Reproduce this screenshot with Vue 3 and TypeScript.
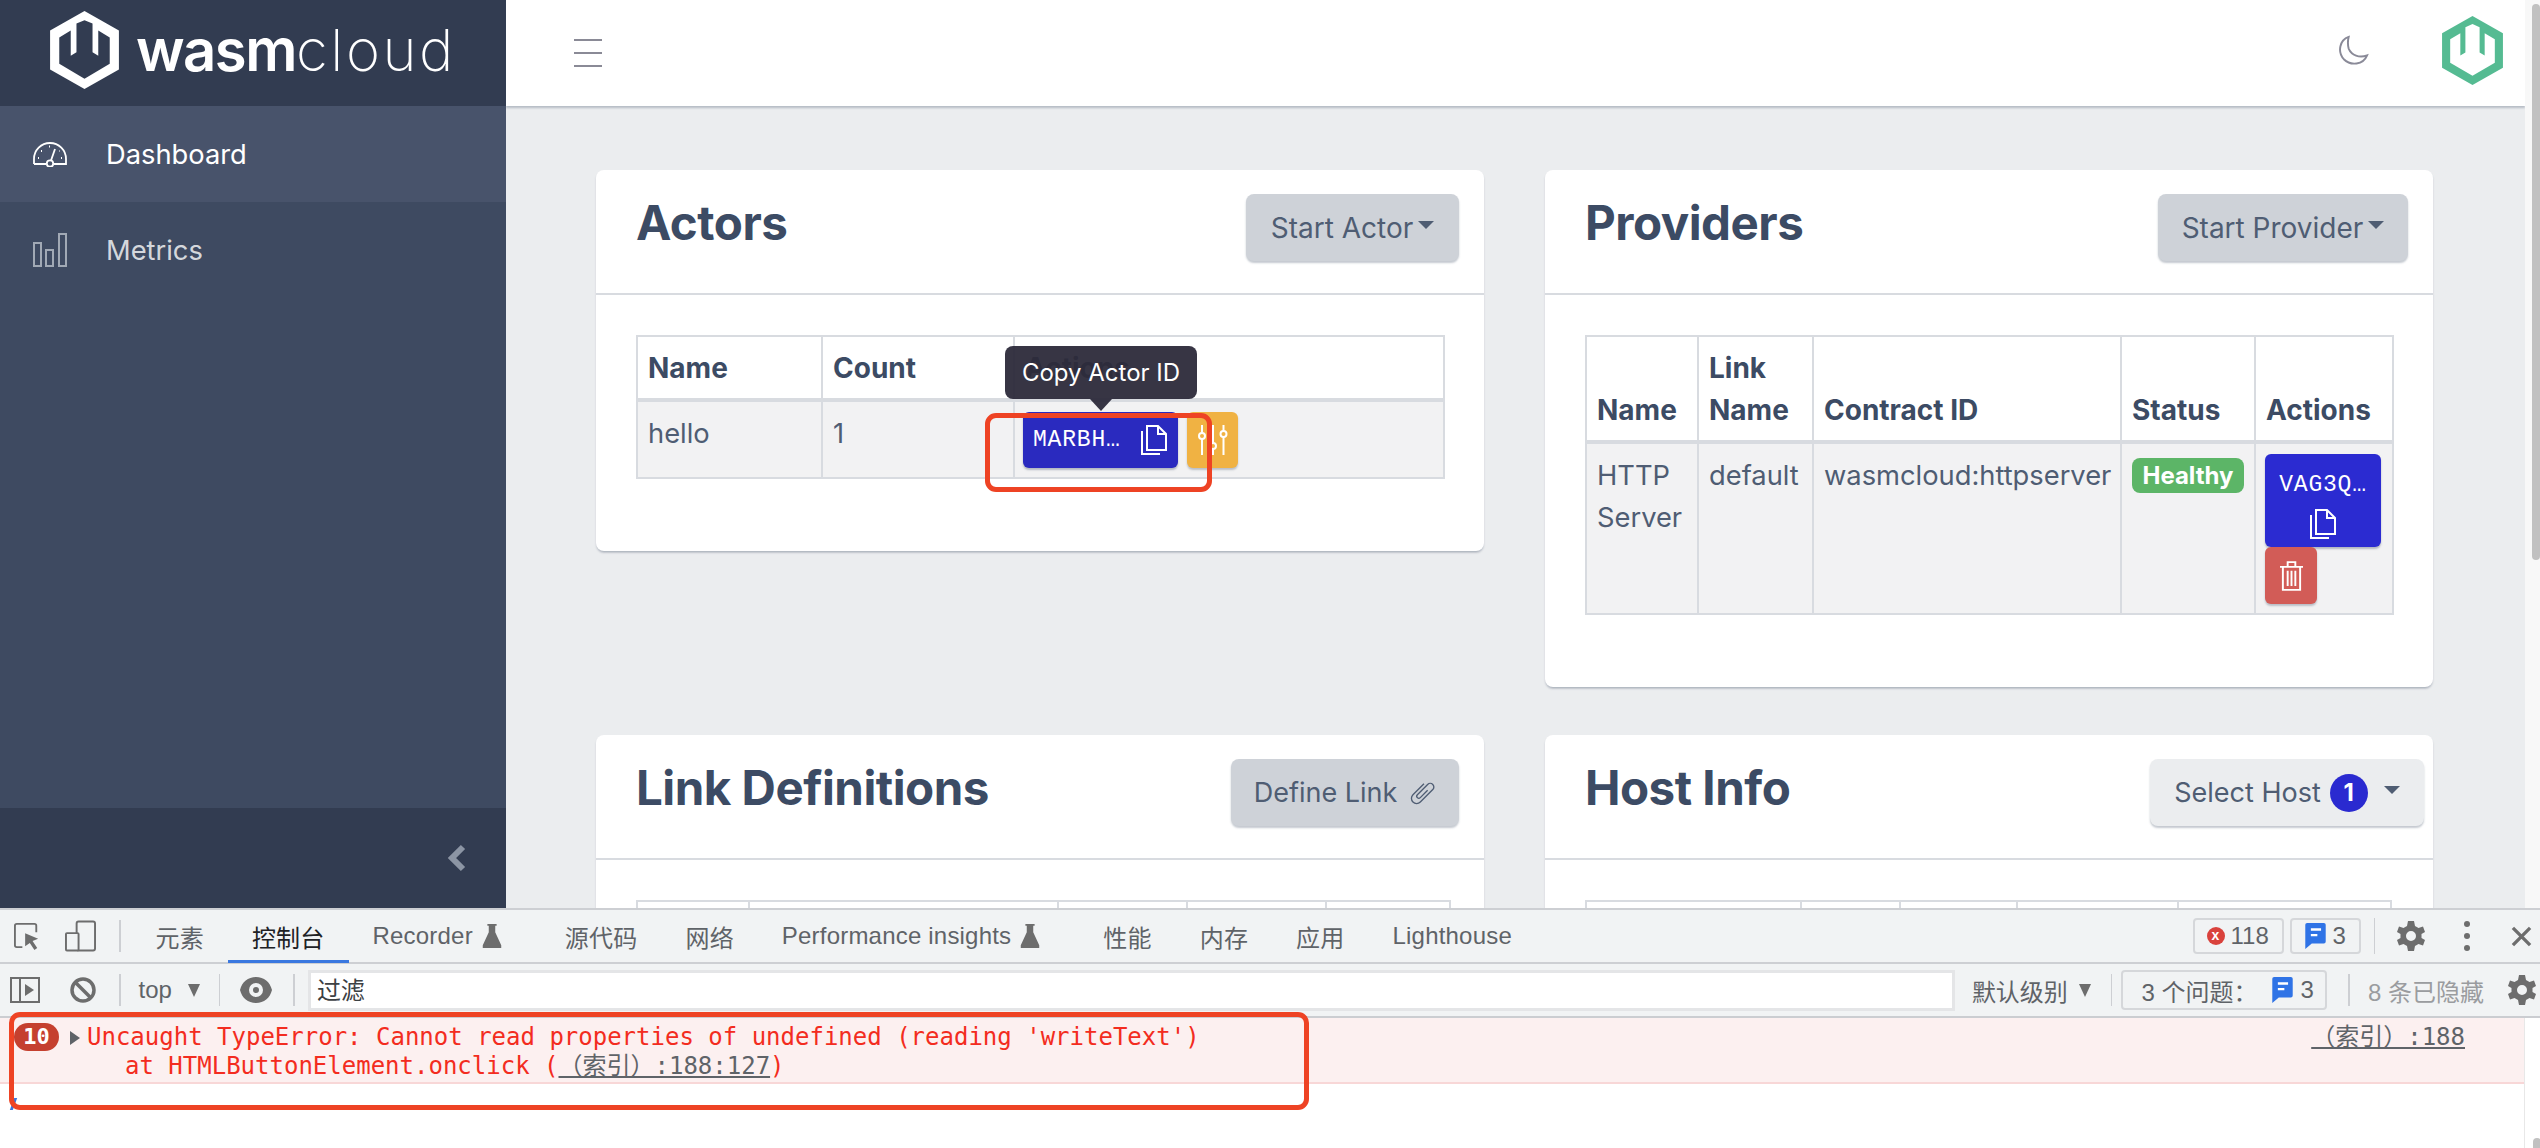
<script setup lang="ts">
const tabs: { label: string; flask?: boolean; active?: boolean }[] = [
  { label: '元素' },
  { label: '控制台', active: true },
  { label: 'Recorder', flask: true },
  { label: '源代码' },
  { label: '网络' },
  { label: 'Performance insights', flask: true },
  { label: '性能' },
  { label: '内存' },
  { label: '应用' },
  { label: 'Lighthouse' },
]
const hexPath =
  'M30 0L60 17V51L30 68L0 51V17ZM8 46V23L18 17V39L23 36V11L30 8L37 11V36L42 39V17L52 23V46L30 59Z'
</script>

<template>
  <div class="page">
    <div class="upper">
      <aside class="sidebar">
        <div class="brand">
          <svg class="brand-hex" viewBox="0 0 60 68"><path fill="#fff" fill-rule="evenodd" :d="hexPath" /></svg>
          <span class="brand-text"><b>wasm</b><i>cloud</i></span>
        </div>
        <nav class="nav">
          <div class="nav-item active">
            <svg class="nav-icon" viewBox="0 0 34 26" fill="none" stroke="#fff" stroke-width="1.8">
              <path d="M1 23V18A16 16 0 0 1 33 18V23H21M13 23H1" />
              <circle cx="17" cy="22.5" r="3.2" />
              <path d="M18 19.5L22 8" />
              <path d="M5 17h1M8 10h1M16 5.5h1M26 10h.5M28 17h1" stroke-width="2" />
            </svg>
            <span>Dashboard</span>
          </div>
          <div class="nav-item">
            <svg class="nav-icon tall" viewBox="0 0 34 34" fill="none" stroke="#a1a9b5" stroke-width="2">
              <rect x="1" y="10" width="7" height="23" />
              <rect x="13" y="17" width="7" height="16" />
              <rect x="26" y="1" width="7" height="32" />
            </svg>
            <span>Metrics</span>
          </div>
        </nav>
        <div class="side-foot">
          <svg viewBox="0 0 20 28" class="chev"><path d="M16 3L5 14L16 25" fill="none" stroke="#8c95a4" stroke-width="6" /></svg>
        </div>
      </aside>

      <div class="main">
        <header class="topbar">
          <div class="burger"><i></i><i></i><i></i></div>
          <div class="top-right">
            <svg class="moon" viewBox="0 0 32 32" fill="none" stroke="#8a8a98" stroke-width="2">
              <path d="M11 2C2 5 -1 17 6 25C13 32 26 31 30 21C22 24 14 21 11 14C10 10 10 6 11 2Z" />
            </svg>
            <svg class="hex-green" viewBox="0 0 60 68"><path fill="#55bb92" fill-rule="evenodd" :d="hexPath" /></svg>
          </div>
        </header>

        <main class="content">
          <section class="card">
            <div class="card-head">
              <h2>Actors</h2>
              <button class="btn btn-grey btn-actor">Start Actor<span class="caret"></span></button>
            </div>
            <div class="card-body">
              <table class="tbl t-actors">
                <thead><tr><th>Name</th><th>Count</th><th>Actions</th></tr></thead>
                <tbody>
                  <tr>
                    <td>hello</td>
                    <td>1</td>
                    <td>
                      <div class="acts">
                        <div class="tip-wrap">
                          <div class="tip">Copy Actor ID</div>
                          <button class="btn-copy dark">
                            <span class="code">MARBH…</span>
                            <svg class="copy" viewBox="0 0 26 30" fill="none" stroke="#fff" stroke-width="2">
                              <path d="M6 1H17L25 9V25H6Z" /><path d="M17 1V9H25" /><path d="M1 6V29H19" />
                            </svg>
                          </button>
                        </div>
                        <button class="btn-orange">
                          <svg viewBox="0 0 30 30" fill="none" stroke="#fff" stroke-width="2">
                            <path d="M4 0V8M4 14V30M25.500 0V6M25.500 12V30M15 0V18M15 24V30" />
                            <circle cx="4" cy="11" r="3" /><circle cx="25.500" cy="9" r="3" /><circle cx="15" cy="21" r="3" />
                          </svg>
                        </button>
                      </div>
                    </td>
                  </tr>
                </tbody>
              </table>
            </div>
          </section>

          <section class="card">
            <div class="card-head">
              <h2>Providers</h2>
              <button class="btn btn-grey btn-provider">Start Provider<span class="caret"></span></button>
            </div>
            <div class="card-body">
              <table class="tbl t-providers">
                <thead><tr><th>Name</th><th>Link Name</th><th>Contract ID</th><th>Status</th><th>Actions</th></tr></thead>
                <tbody>
                  <tr>
                    <td>HTTP Server</td>
                    <td>default</td>
                    <td>wasmcloud:httpserver</td>
                    <td><span class="healthy">Healthy</span></td>
                    <td class="pv-acts">
                      <button class="btn-copy stack">
                        <span class="code">VAG3Q…</span>
                        <svg class="copy" viewBox="0 0 26 30" fill="none" stroke="#fff" stroke-width="2">
                          <path d="M6 1H17L25 9V25H6Z" /><path d="M17 1V9H25" /><path d="M1 6V29H19" />
                        </svg>
                      </button>
                      <button class="btn-trash">
                        <svg viewBox="0 0 24 32" fill="none" stroke="#fff" stroke-width="2">
                          <path d="M0 7H24M8 7V2H16V7M3 7V31H21V7M8 11V27M12 11V27M16 11V27" />
                        </svg>
                      </button>
                    </td>
                  </tr>
                </tbody>
              </table>
            </div>
          </section>

          <section class="card">
            <div class="card-head">
              <h2>Link Definitions</h2>
              <button class="btn btn-grey btn-link">
                Define Link
                <svg class="clip" viewBox="0 0 26 26" fill="none" stroke="#4f5d73" stroke-width="1.3">
                  <g transform="rotate(45 13 13)">
                    <path d="M8 6V21A5 5 0 0 0 18 21V4A3.500 3.500 0 0 0 11 4V18A2 2 0 0 0 15 18V8" />
                  </g>
                </svg>
              </button>
            </div>
            <div class="card-body">
              <table class="tbl t-links">
                <tbody><tr><td></td><td></td><td></td><td></td><td></td></tr></tbody>
              </table>
            </div>
          </section>

          <section class="card">
            <div class="card-head">
              <h2>Host Info</h2>
              <button class="btn btn-light btn-host">
                Select Host <span class="count">1</span><span class="caret host-caret"></span>
              </button>
            </div>
            <div class="card-body">
              <table class="tbl t-hosts">
                <tbody><tr><td></td><td></td><td></td><td></td><td></td></tr></tbody>
              </table>
            </div>
          </section>
        </main>
      </div>
      <div class="track"><div class="thumb"></div></div>
    </div>

    <div class="devtools">
      <div class="dt-row dt-tabs">
        <svg class="dt-ic inspect" viewBox="0 0 28 30" fill="none" stroke="#6d6d6d" stroke-width="2">
          <path d="M9 27H3A2 2 0 0 1 1 25V4A2 2 0 0 1 3 2H22A2 2 0 0 1 24 4V11" />
          <path d="M12 12L26 18L20 20.500L25 28L22 30L17 22.500L12 26Z" fill="#6d6d6d" stroke="none" />
        </svg>
        <svg class="dt-ic device" viewBox="0 0 32 32" fill="none" stroke="#6d6d6d" stroke-width="2">
          <rect x="12" y="1" width="19" height="30" rx="2" />
          <rect x="1" y="13" width="13" height="18" rx="1" fill="#f1f3f4" />
        </svg>
        <span class="sep"></span>
        <div class="tabs">
          <div v-for="t in tabs" :key="t.label" class="tab" :class="{ on: t.active }">
            {{ t.label }}
            <svg v-if="t.flask" class="flask" viewBox="0 0 20 26"><path d="M5 0H15V2H13.500V9L20 23V26H0V23L6.500 9V2H5Z" fill="#6d6d6d" /></svg>
          </div>
        </div>
        <div class="dt-right">
          <div class="pill p-err">
            <span class="x-dot">x</span><span>118</span>
          </div>
          <div class="pill p-msg">
            <svg class="chat" viewBox="0 0 22 28"><path d="M2 0H20A2 2 0 0 1 22 2V20A2 2 0 0 1 20 22H7L0 28V2A2 2 0 0 1 2 0Z" fill="#2f73e6" /><path d="M6 7H17M6 13H13" stroke="#fff" stroke-width="2.500" /></svg>
            <span>3</span>
          </div>
          <span class="sep s-r1"></span>
          <svg class="gear" viewBox="0 0 28 30"><path fill="#6d6d6d" fill-rule="evenodd" d="M11 0H17L18 5L21.500 7L26 5.500L28 11L24.500 13V17L28 19L26 24.500L21.500 23L18 25L17 30H11L10 25L6.500 23L2 24.500L0 19L3.500 17V13L0 11L2 5.500L6.500 7L10 5ZM14 10A5 5 0 1 0 14 20A5 5 0 1 0 14 10Z" /></svg>
          <div class="dots"><i></i><i></i><i></i></div>
          <svg class="close" viewBox="0 0 22 22"><path d="M2 2L20 20M20 2L2 20" stroke="#6d6d6d" stroke-width="3.500" /></svg>
        </div>
      </div>

      <div class="dt-row dt-filter">
        <svg class="dt-ic panel" viewBox="0 0 30 26" fill="none" stroke="#6d6d6d" stroke-width="2">
          <rect x="1" y="1" width="28" height="24" /><path d="M10 1V25" /><path d="M15 7L24 13L15 19Z" fill="#6d6d6d" stroke="none" />
        </svg>
        <svg class="dt-ic ban" viewBox="0 0 26 26" fill="none" stroke="#6d6d6d" stroke-width="3.500">
          <circle cx="13" cy="13" r="11" /><path d="M5 5L21 21" />
        </svg>
        <span class="sep s-f1"></span>
        <span class="top-ctx">top</span><span class="tri t-top"></span>
        <span class="sep s-f2"></span>
        <svg class="dt-ic eye" viewBox="0 0 32 26"><path fill="#6d6d6d" fill-rule="evenodd" d="M16 0C24 0 30 5 32 13C30 21 24 26 16 26C8 26 2 21 0 13C2 5 8 0 16 0ZM16 6A7 7 0 1 0 16 20A7 7 0 1 0 16 6ZM16 10A3 3 0 1 1 16 16A3 3 0 1 1 16 10Z" /></svg>
        <span class="sep s-f3"></span>
        <div class="filter">过滤</div>
        <span class="level">默认级别</span><span class="tri t-level"></span>
        <span class="sep s-f4"></span>
        <div class="pill p-issues">
          <span>3 个问题：</span>
          <svg class="chat" viewBox="0 0 22 28"><path d="M2 0H20A2 2 0 0 1 22 2V20A2 2 0 0 1 20 22H7L0 28V2A2 2 0 0 1 2 0Z" fill="#2f73e6" /><path d="M6 7H17M6 13H13" stroke="#fff" stroke-width="2.500" /></svg>
          <span>3</span>
        </div>
        <span class="sep s-f5"></span>
        <span class="hidden-n">8 条已隐藏</span>
        <svg class="gear g2" viewBox="0 0 28 30"><path fill="#6d6d6d" fill-rule="evenodd" d="M11 0H17L18 5L21.500 7L26 5.500L28 11L24.500 13V17L28 19L26 24.500L21.500 23L18 25L17 30H11L10 25L6.500 23L2 24.500L0 19L3.500 17V13L0 11L2 5.500L6.500 7L10 5ZM14 10A5 5 0 1 0 14 20A5 5 0 1 0 14 10Z" /></svg>
      </div>

      <div class="console">
        <div class="log">
          <div class="err">
            <span class="err-count">10</span>
            <span class="err-tri"></span>
            <div class="err-msg">
              <div>Uncaught TypeError: Cannot read properties of undefined (reading 'writeText')</div>
              <div class="err-l2">at HTMLButtonElement.onclick (<span class="src">（索引）:188:127</span>)</div>
            </div>
            <span class="src src-r">（索引）:188</span>
          </div>
          <div class="caret-blue"></div>
        </div>
        <div class="con-track"><div class="con-thumb"></div></div>
      </div>
    </div>

    <div class="mark mark-a"></div>
    <div class="mark mark-b"></div>
  </div>
</template>

<style>
html, body { margin: 0; padding: 0; overflow: hidden; background: #fff; }
</style>

<style scoped>
.page { position: relative; width: 2540px; height: 1148px; overflow: hidden; font-family: Inter, "Noto Sans CJK SC", sans-serif; color: #4f5d73; text-spacing-trim: space-all; }
.upper { display: flex; height: 908px; overflow: hidden; background: #ebedef; }

.sidebar { width: 506px; flex: none; display: flex; flex-direction: column; background: #3e4a61; }
.brand { height: 106px; flex: none; background: #323c51; display: flex; align-items: center; padding: 0 0 6px 50px; box-sizing: border-box; }
.brand-hex { width: 69px; height: 78px; flex: none; }
.brand-text { margin-left: 17px; font-family: Inter, sans-serif; font-size: 58px; line-height: 1; color: #fff; letter-spacing: -1.500px; }
.brand-text b { font-weight: 600; }
.brand-text i { font-style: normal; font-weight: 200; letter-spacing: 2.600px; }
.nav { flex: 1; }
.nav-item { height: 96px; display: flex; align-items: center; padding-left: 33px; font-size: 27.300px; color: rgba(255,255,255,.8); }
.nav-item.active { background: #48536b; color: #fff; }
.nav-icon { width: 34px; height: 26px; margin-right: 39px; }
.nav-icon.tall { height: 34px; }
.side-foot { height: 100px; flex: none; background: #323c51; display: flex; align-items: center; justify-content: flex-end; padding-right: 39px; box-sizing: border-box; }
.chev { width: 20px; height: 28px; }

.main { flex: 1; min-width: 0; display: flex; flex-direction: column; padding-right: 15px; }
.topbar { height: 106px; flex: none; box-sizing: border-box; background: #fff; display: flex; align-items: center; justify-content: space-between; padding: 0 22px 0 68px; box-shadow: 0 2px 2px rgba(60,75,100,.3); position: relative; }
.burger { display: flex; flex-direction: column; gap: 10.500px; width: 28px; }
.burger i { display: block; height: 2.500px; background: #8a8a96; }
.top-right { display: flex; align-items: center; gap: 73px; margin-top: -6px; }
.moon { width: 31px; height: 31px; }
.hex-green { width: 61px; height: 69px; }

.content { display: grid; grid-template-columns: 888px 888px; column-gap: 61px; row-gap: 48px; align-items: start; padding: 64px 0 0 90px; }
.card { background: #fff; border-radius: 8px; box-shadow: 0 2px 2px rgba(60,75,100,.2), 0 3px 2px -2px rgba(60,75,100,.2); }
.card-head { display: flex; justify-content: space-between; align-items: flex-start; height: 125px; box-sizing: border-box; padding: 24px 25px 0 40px; border-bottom: 2px solid #d8dbe0; }
.card-head h2 { margin: 1px 0 0; font-size: 47.500px; line-height: 56px; font-weight: 700; color: #3c4b64; letter-spacing: -.5px; }
.card-body { padding: 40px 40px 72px; }

.btn { height: 67px; box-sizing: border-box; border: 0; border-radius: 8px; font: 400 27px Inter, sans-serif; color: #4f5d73; display: inline-flex; align-items: center; justify-content: center; box-shadow: 0 2px 2px rgba(60,75,100,.3); white-space: nowrap; padding: 0; }
.btn-grey { background: #ced2d8; }
.btn-light { background: #ebedef; }
.btn-actor { width: 213px; font-size: 28px; }
.btn-provider { width: 250px; font-size: 28px; }
.btn-link { width: 228px; gap: 12px; }
.btn-host { width: 274px; margin-right: -16px; }
.caret { width: 0; height: 0; border: 8.500px solid transparent; border-top-color: #4f5d73; border-bottom: 0; margin-left: 5px; margin-top: -5px; }
.host-caret { margin-left: 16px; }
.clip { width: 27px; height: 27px; }
.count { margin-left: 9px; width: 38px; height: 38px; border-radius: 50%; background: #2a2ad0; color: #fff; font-size: 24px; font-weight: 700; display: inline-flex; align-items: center; justify-content: center; }

.tbl { border-collapse: collapse; table-layout: fixed; font-size: 27.300px; line-height: 42px; }
.tbl th, .tbl td { border: 2px solid #d8dbe0; padding: 10px; text-align: left; vertical-align: top; box-sizing: border-box; }
.tbl th { vertical-align: bottom; font-size: 28px; font-weight: 700; color: #3c4b64; border-bottom-width: 4px; padding-bottom: 9px; }
.tbl td { background: #f2f2f3; padding-top: 11px; padding-bottom: 9px; }
.t-actors { width: 809px; }
.t-actors th:nth-child(1) { width: 185px; }
.t-actors th:nth-child(2) { width: 192px; }
.t-providers { width: 809px; }
.t-providers th:nth-child(1) { width: 112px; }
.t-providers th:nth-child(2) { width: 115px; }
.t-providers th:nth-child(3) { width: 308px; }
.t-providers th:nth-child(4) { width: 134px; }
.t-links { width: 815px; }
.t-hosts { width: 807px; }
.t-links td, .t-hosts td { background: #fff; height: 60px; }
.t-links td:nth-child(1) { width: 112px; }
.t-links td:nth-child(2) { width: 309px; }
.t-links td:nth-child(3) { width: 129px; }
.t-links td:nth-child(4) { width: 139px; }
.t-hosts td:nth-child(1) { width: 215px; }
.t-hosts td:nth-child(2) { width: 99px; }
.t-hosts td:nth-child(3) { width: 117px; }
.t-hosts td:nth-child(4) { width: 161px; }

.acts { display: flex; gap: 9px; margin: -1px 0 0 -2px; }
.tip-wrap { position: relative; }
.tip { position: absolute; left: -18px; top: -66px; width: 192px; height: 53px; box-sizing: border-box; border-radius: 8px; background: rgba(44,42,58,.95); color: #fff; font-size: 24px; line-height: 53px; text-align: center; z-index: 2; }
.tip::after { content: ""; position: absolute; left: 85px; top: 53px; border: 11px solid transparent; border-top: 12px solid rgba(44,42,58,.95); border-bottom: 0; }
.btn-copy { border: 0; border-radius: 6px; background: #2a2abf; color: #fff; box-shadow: 0 2px 2px rgba(60,75,100,.35); padding: 0; display: flex; align-items: center; }
.btn-copy.dark { width: 155px; height: 56px; padding: 0 11px 0 10px; justify-content: space-between; box-sizing: border-box; }
.btn-copy.stack { width: 116px; height: 93px; margin-top: -1px; background: #2b2bd1; flex-direction: column; justify-content: flex-start; padding-top: 16px; box-sizing: border-box; }
.code { font: 23px/30px "Liberation Mono", monospace; letter-spacing: .8px; white-space: nowrap; }
.copy { width: 26px; height: 30px; flex: none; }
.stack .copy { margin-top: 9px; }
.btn-orange { width: 51px; height: 56px; border: 0; padding: 0; border-radius: 6px; background: #f0b243; box-shadow: 0 2px 2px rgba(60,75,100,.3); display: flex; align-items: center; justify-content: center; }
.btn-orange svg { width: 30px; height: 30px; }
.healthy { display: inline-block; margin-top: 3px; height: 35px; width: 112px; border-radius: 8px; background: #5cb567; color: #fff; font-size: 24px; line-height: 35px; font-weight: 700; text-align: center; vertical-align: top; }
.pv-acts { padding-left: 9px !important; }
.btn-trash { display: flex; align-items: center; justify-content: center; width: 52px; height: 57px; border: 0; padding: 0; border-radius: 6px; background: #d25c57; box-shadow: 0 2px 2px rgba(60,75,100,.3); }
.btn-trash svg { width: 23px; height: 31px; }

.track { position: absolute; left: 2525px; top: 0; width: 15px; height: 908px; background: #f8f8f8; }
.thumb { margin: 4px 0 0 7px; width: 8px; height: 556px; border-radius: 4px; background: #c1c1c1; }

.devtools { height: 240px; display: flex; flex-direction: column; font-family: "Liberation Sans", "Noto Sans CJK SC", sans-serif; font-size: 24px; color: #5f6368; background: #fff; }
.dt-row { display: flex; align-items: center; flex: none; background: #f1f3f4; box-sizing: border-box; position: relative; }
.dt-tabs { height: 56px; border-top: 2px solid #cdcfd3; border-bottom: 2px solid #cdcfd3; padding-left: 14px; }
.dt-filter { height: 54px; border-bottom: 2px solid #cbcdd1; padding-left: 10px; }
.sep { width: 1.500px; height: 32px; background: #cdcfd3; flex: none; }
.dt-ic { flex: none; }
.inspect { width: 26px; height: 30px; }
.device { width: 31px; height: 32px; margin-left: 25px; }
.dt-tabs > .sep { margin-left: 23px; }
.tabs { display: flex; align-self: stretch; margin-left: 11px; letter-spacing: .2px; }
.tab { display: flex; align-items: center; padding: 0 24px; position: relative; white-space: nowrap; }
.tab.on { color: #202124; }
.tab.on::after { content: ""; position: absolute; left: 0; right: 0; bottom: -1px; height: 3px; background: #3a78e0; }
.flask { width: 20px; height: 24px; margin-left: 9px; margin-right: 15px; }
.dt-right { margin-left: auto; display: flex; align-items: center; padding-right: 8px; }
.pill { display: flex; align-items: center; box-sizing: border-box; border: 2px solid #d5d7da; border-radius: 4px; color: #5f6368; }
.p-err { width: 91px; height: 36px; padding-left: 12px; gap: 6px; }
.p-msg { width: 71px; height: 36px; margin-left: 6px; padding-left: 13px; gap: 7px; }
.x-dot { width: 18px; height: 18px; border-radius: 50%; background: #d9423c; color: #fff; font-size: 14px; line-height: 16px; text-align: center; font-weight: 700; }
.chat { width: 21px; height: 26px; flex: none; }
.s-r1 { margin-left: 13px; height: 36px; }
.gear { width: 28px; height: 30px; margin-left: 22px; flex: none; }
.dots { display: flex; flex-direction: column; gap: 6px; margin-left: 39px; }
.dots i { display: block; width: 6px; height: 6px; border-radius: 50%; background: #6d6d6d; }
.close { width: 21px; height: 21px; margin-left: 41px; }

.panel { width: 30px; height: 26px; }
.ban { width: 26px; height: 26px; margin-left: 30px; }
.s-f1 { margin-left: 23px; }
.top-ctx { margin-left: 18px; }
.tri { width: 0; height: 0; border: 6.500px solid transparent; border-top: 13px solid #6d6d6d; border-bottom: 0; flex: none; }
.t-top { margin-left: 16px; }
.s-f2 { margin-left: 19px; }
.eye { width: 32px; height: 26px; margin-left: 20px; }
.s-f3 { margin-left: 21px; }
.filter { margin-left: 13px; width: 1647px; height: 41px; box-sizing: border-box; background: #fff; border: 3px solid #e4e5e7; line-height: 35px; padding-left: 6px; color: #3c4043; flex: none; }
.level { margin-left: 17px; }
.t-level { margin-left: 11px; }
.s-f4 { margin-left: 20px; }
.p-issues { margin-left: 9px; width: 206px; height: 40px; padding-left: 18px; gap: 0; }
.p-issues .chat { margin-left: 15px; margin-right: 7px; }
.s-f5 { margin-left: 21px; }
.hidden-n { margin-left: 18px; color: #9a9c9f; }
.g2 { margin-left: 24px; }

.console { flex: 1; display: flex; min-height: 0; }
.log { flex: 1; min-width: 0; }
.err { height: 66px; box-sizing: border-box; background: #fcf0f0; border-bottom: 2px solid #f8d7d7; display: flex; align-items: flex-start; font-family: "DejaVu Sans Mono", "Noto Sans CJK SC", monospace; font-size: 24px; line-height: 29px; color: #f32c20; padding: 5px 0 0 14px; }
.err-count { width: 45px; height: 28px; flex: none; border-radius: 14px; background: #c5402f; color: #fff; font-size: 22px; line-height: 28px; font-weight: 700; text-align: center; }
.err-tri { width: 0; height: 0; flex: none; margin: 8px 7px 0 11px; border: 7px solid transparent; border-left: 10px solid #5f6368; border-right: 0; }
.err-msg { flex: 1; white-space: nowrap; }
.err-l2 { padding-left: 38px; }
.src { color: #5f6368; text-decoration: underline; }
.src-r { margin-right: 59px; }
.caret-blue { width: 3px; height: 12px; margin: 14px 0 0 12px; background: #3a78e0; transform: skewX(-20deg); }
.con-track { width: 15px; flex: none; border-left: 1px solid #e8e8e8; }
.con-thumb { width: 8px; height: 30px; margin: 120px 0 0 8px; border-radius: 4px; background: #c1c1c1; }

.mark { position: absolute; box-sizing: border-box; border: 5px solid #ee4324; border-radius: 11px; z-index: 5; pointer-events: none; }
.mark-a { left: 985px; top: 413px; width: 227px; height: 79px; }
.mark-b { left: 9px; top: 1012px; width: 1300px; height: 98px; }
</style>
